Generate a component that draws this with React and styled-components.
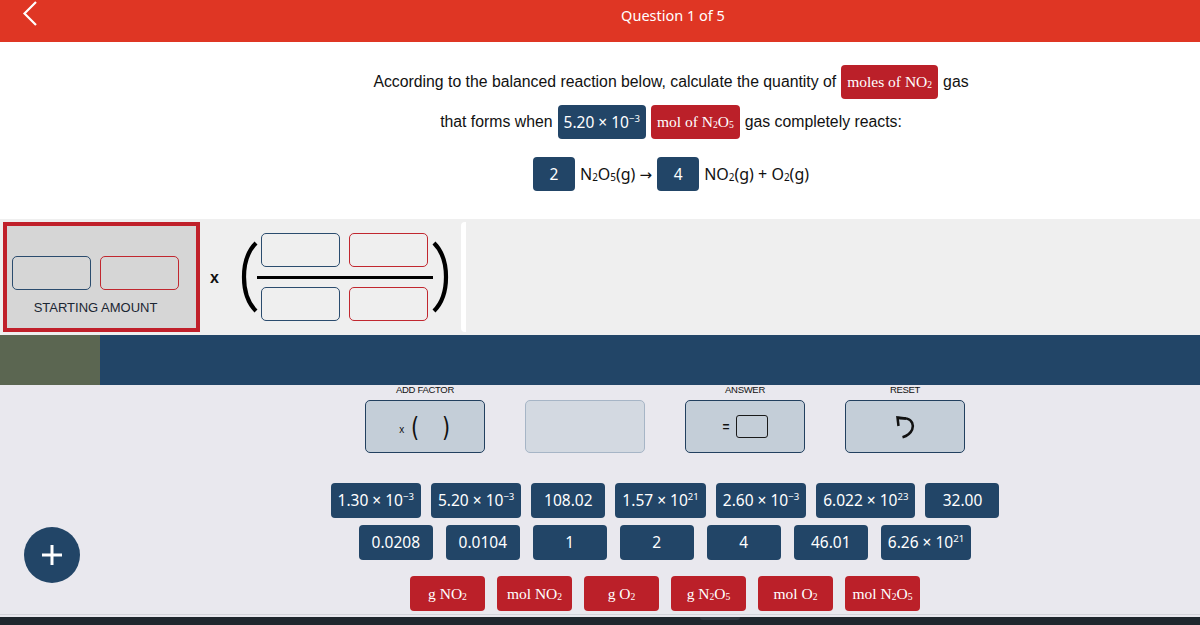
import React from 'react';
import styled, { createGlobalStyle } from 'styled-components';

const GlobalStyle = createGlobalStyle`
  html, body {
    margin: 0;
    padding: 0;
    background: #ffffff;
  }
  * {
    box-sizing: border-box;
  }
`;

const NAVY = '#224567';
const CRIMSON = '#bb2029';
const UI_FONT = '"Noto Sans", "Open Sans", sans-serif';
const SERIF = '"Liberation Serif", "Times New Roman", serif';

const Screen = styled.div`
  width: 1200px;
  height: 625px;
  overflow: hidden;
  display: flex;
  flex-direction: column;
  font-family: "Liberation Sans", Arial, sans-serif;

  sub {
    font-size: 0.62em;
    vertical-align: -0.12em;
    line-height: 0;
  }
  sup {
    font-size: 0.62em;
    vertical-align: 0.6em;
    line-height: 0;
  }
`;

const Header = styled.header`
  height: 42px;
  flex-shrink: 0;
  background: #df3624;
  display: grid;
  grid-template-columns: 146px 1fr;
  align-items: center;
`;

const BackButton = styled.button`
  display: flex;
  align-items: flex-start;
  align-self: start;
  height: 42px;
  padding: 1px 0 0 22px;
  border: none;
  background: transparent;
  cursor: pointer;
`;

const Title = styled.h1`
  margin: 0 0 12px 0;
  text-align: center;
  color: #ffffff;
  font-family: ${UI_FONT};
  font-size: 14.5px;
  font-weight: 400;
`;

const Prompt = styled.section`
  flex-shrink: 0;
  height: 177px;
  padding: 23px 0 0 142px;
  display: flex;
  flex-direction: column;
  align-items: center;
`;

const PromptLine = styled.div`
  display: flex;
  align-items: center;
  gap: 5px;
  height: 34px;
  margin-bottom: ${p => p.$after || 6}px;
  font-size: 15.8px;
  color: #111111;
`;

const Chip = styled.span`
  display: inline-block;
  height: ${p => p.$h || 34}px;
  line-height: ${p => p.$h || 34}px;
  padding: 0 ${p => p.$pad || 6}px;
  min-width: ${p => p.$min || 0}px;
  text-align: center;
  border-radius: 4px;
  color: #ffffff;
  background: ${p => (p.$unit ? CRIMSON : NAVY)};
  font-family: ${p => (p.$unit ? SERIF : UI_FONT)};
  font-size: 15.5px;
  white-space: nowrap;
`;

const Equation = styled.div`
  display: flex;
  align-items: center;
  gap: 5px;
  height: 34px;
  font-family: ${UI_FONT};
  font-size: 16px;
  color: #111111;
`;

const Arrow = styled.span`
  font-family: "DejaVu Sans", sans-serif;
  font-size: 15px;
`;

const Coefficient = styled(Chip)`
  width: 42px;
`;

const Workspace = styled.section`
  flex-shrink: 0;
  height: 116px;
  background: #efefef;
  display: flex;
  align-items: center;
  padding-left: 3px;
`;

const StartBox = styled.div`
  width: 197px;
  height: 110px;
  border: 4px solid #c0202a;
  background: #d6d6d6;
  display: flex;
  flex-direction: column;
  align-items: flex-start;
  padding: 30px 0 0 5px;
`;

const StartContent = styled.div`
  display: flex;
  flex-direction: column;
  align-items: center;
  gap: 10px;
`;

const SlotRow = styled.div`
  display: flex;
  gap: 9px;
`;

const Slot = styled.div`
  width: 79px;
  height: 34px;
  border-radius: 5px;
  border: 1px solid ${p => (p.$unit ? '#c1272f' : '#2b4c6e')};
`;

const StartLabel = styled.div`
  font-size: 13px;
  line-height: 16px;
  color: #1b2633;
`;

const Times = styled.span`
  margin: 0 22px 0 10px;
  font-size: 16px;
  font-weight: 700;
  color: #111111;
  padding-top: 2px;
`;

const Fraction = styled.div`
  display: flex;
  align-items: center;
`;

const Stack = styled.div`
  width: 176px;
  display: flex;
  flex-direction: column;
  align-items: center;
`;

const Bar = styled.div`
  align-self: stretch;
  height: 3.5px;
  background: #000000;
  margin: 9px 0 8px;
`;

const Divider = styled.div`
  width: 5px;
  height: 110px;
  margin-left: 12px;
  background: #ffffff;
  border-radius: 4px 0 0 4px;
`;

const Band = styled.div`
  flex-shrink: 0;
  height: 50px;
  display: flex;
  background: ${NAVY};
`;

const BandTab = styled.div`
  width: 100px;
  background: #5b6651;
`;

const Tray = styled.section`
  flex-shrink: 0;
  height: 230px;
  background: #e9e8ee;
  border-bottom: 1px solid #d3d3d9;
  display: flex;
`;

const Side = styled.div`
  width: 130px;
  display: flex;
  flex-direction: column;
  justify-content: flex-end;
  padding: 0 0 31px 24px;
`;

const AddButton = styled.button`
  width: 56px;
  height: 56px;
  border-radius: 50%;
  border: none;
  background: ${NAVY};
  display: flex;
  align-items: center;
  justify-content: center;
  cursor: pointer;
`;

const Board = styled.div`
  flex: 1;
  display: flex;
  flex-direction: column;
  align-items: center;
`;

const Tools = styled.div`
  display: flex;
  gap: 40px;
`;

const Tool = styled.div`
  width: 120px;
  display: flex;
  flex-direction: column;
  align-items: center;
`;

const ToolLabel = styled.div`
  height: 15px;
  font-size: 9.5px;
  line-height: 10px;
  color: #111111;
  letter-spacing: -0.3px;
`;

const ToolButton = styled.button`
  width: 120px;
  height: 53px;
  border-radius: 5px;
  border: 1px solid ${p => (p.disabled ? '#a6b5c6' : '#22405f')};
  background: ${p => (p.disabled ? '#d3d9e1' : '#c4ced8')};
  display: flex;
  align-items: center;
  justify-content: center;
  gap: 6px;
  padding: 0;
  color: #111111;
  font-family: "Liberation Sans", Arial, sans-serif;
  cursor: ${p => (p.disabled ? 'default' : 'pointer')};
`;

const SmallX = styled.span`
  font-size: 10px;
  margin-top: 6px;
`;

const BigParen = styled.span`
  font-family: "DejaVu Sans", sans-serif;
  font-size: 26px;
  margin: 0 ${p => p.$space || 0}px 0 0;
  line-height: 1;
  transform: scaleX(0.8);
`;

const Equals = styled.span`
  font-size: 12px;
  font-weight: 700;
`;

const AnswerSlot = styled.span`
  width: 32px;
  height: 23px;
  border: 1.5px solid #1a1a1a;
  border-radius: 3px;
`;

const ChipRow = styled.div`
  display: flex;
  gap: ${p => p.$gap}px;
  margin-top: ${p => p.$top}px;
`;

const Footer = styled.div`
  flex: 1;
  border-top: 2px solid #e9e8ee;
  background: #1f262d;
  display: flex;
  justify-content: center;
`;

const FooterTab = styled.div`
  width: 40px;
  height: 3px;
  margin-left: 240px;
  background: #2e363e;
  border-radius: 0 0 3px 3px;
`;

const Chevron = () => (
  <svg width="16" height="26" viewBox="0 0 16 26">
    <polyline points="14,1 2.5,12.5 14,24" fill="none" stroke="#ffffff" strokeWidth="2.2" />
  </svg>
);

const Paren = ({ right }) => (
  <svg width="18" height="72" viewBox="0 0 18 72" style={{ margin: right ? '0 0 0 -2px' : '0 -2px 0 0' }}>
    <path
      d={right ? 'M3 2 C 19 18, 19 54, 3 70' : 'M15 2 C -1 18, -1 54, 15 70'}
      fill="none"
      stroke="#000000"
      strokeWidth="4.2"
    />
  </svg>
);

// curved "undo" arrow: corner head at top-left, sweep clockwise down to the bottom
const UndoIcon = () => (
  <svg width="22" height="26" viewBox="0 0 22 26">
    <path
      d="M4.5 12 L3.5 3.5 L12 4.5"
      fill="none"
      stroke="#111111"
      strokeWidth="2.5"
      strokeLinejoin="miter"
    />
    <path
      d="M4 4 C 8 4.5, 11 4, 13 4.6 C 18 6, 20 11, 18.2 15.5 C 16.5 19.5, 13 22, 8.5 23.2"
      fill="none"
      stroke="#111111"
      strokeWidth="2.5"
    />
  </svg>
);

const PlusIcon = () => (
  <svg width="24" height="24" viewBox="0 0 24 24">
    <path d="M12 2 V22 M2 12 H22" stroke="#ffffff" strokeWidth="3" />
  </svg>
);

const Sci = ({ base, exp }) => (
  <>
    {base} × 10<sup>{exp}</sup>
  </>
);

const values = [
  [<Sci base="1.30" exp="−3" />, <Sci base="5.20" exp="−3" />, '108.02', <Sci base="1.57" exp="21" />,
    <Sci base="2.60" exp="−3" />, <Sci base="6.022" exp="23" />, '32.00'],
  ['0.0208', '0.0104', '1', '2', '4', '46.01', <Sci base="6.26" exp="21" />],
];

const units = [
  <>g NO<sub>2</sub></>,
  <>mol NO<sub>2</sub></>,
  <>g O<sub>2</sub></>,
  <>g N<sub>2</sub>O<sub>5</sub></>,
  <>mol O<sub>2</sub></>,
  <>mol N<sub>2</sub>O<sub>5</sub></>,
];

export default function App() {
  return (
    <>
      <GlobalStyle />
      <Screen>
        <Header>
          <BackButton aria-label="Back">
            <Chevron />
          </BackButton>
          <Title>Question 1 of 5</Title>
        </Header>

        <Prompt>
          <PromptLine>
            <span>According to the balanced reaction below, calculate the quantity of</span>
            <Chip $unit>moles of NO<sub>2</sub></Chip>
            <span>gas</span>
          </PromptLine>
          <PromptLine $after={18}>
            <span>that forms when</span>
            <Chip><Sci base="5.20" exp="−3" /></Chip>
            <Chip $unit>mol of N<sub>2</sub>O<sub>5</sub></Chip>
            <span>gas completely reacts:</span>
          </PromptLine>
          <Equation>
            <Coefficient>2</Coefficient>
            <span>N<sub>2</sub>O<sub>5</sub>(g) <Arrow>→</Arrow></span>
            <Coefficient>4</Coefficient>
            <span>NO<sub>2</sub>(g) + O<sub>2</sub>(g)</span>
          </Equation>
        </Prompt>

        <Workspace>
          <StartBox>
            <StartContent>
              <SlotRow>
                <Slot />
                <Slot $unit />
              </SlotRow>
              <StartLabel>STARTING AMOUNT</StartLabel>
            </StartContent>
          </StartBox>
          <Times>x</Times>
          <Fraction>
            <Paren />
            <Stack>
              <SlotRow>
                <Slot />
                <Slot $unit />
              </SlotRow>
              <Bar />
              <SlotRow>
                <Slot />
                <Slot $unit />
              </SlotRow>
            </Stack>
            <Paren right />
          </Fraction>
          <Divider />
        </Workspace>

        <Band>
          <BandTab />
        </Band>

        <Tray>
          <Side>
            <AddButton aria-label="Add">
              <PlusIcon />
            </AddButton>
          </Side>
          <Board>
            <Tools>
              <Tool>
                <ToolLabel>ADD FACTOR</ToolLabel>
                <ToolButton>
                  <SmallX>x</SmallX>
                  <BigParen $space={14}>(</BigParen>
                  <BigParen>)</BigParen>
                </ToolButton>
              </Tool>
              <Tool>
                <ToolLabel />
                <ToolButton disabled />
              </Tool>
              <Tool>
                <ToolLabel>ANSWER</ToolLabel>
                <ToolButton>
                  <Equals>=</Equals>
                  <AnswerSlot />
                </ToolButton>
              </Tool>
              <Tool>
                <ToolLabel>RESET</ToolLabel>
                <ToolButton>
                  <UndoIcon />
                </ToolButton>
              </Tool>
            </Tools>

            <ChipRow $gap={10} $top={30}>
              {values[0].map((v, i) => (
                <Chip key={i} $h={35} $min={74} $pad={7}>{v}</Chip>
              ))}
            </ChipRow>
            <ChipRow $gap={13} $top={7}>
              {values[1].map((v, i) => (
                <Chip key={i} $h={35} $min={74} $pad={7}>{v}</Chip>
              ))}
            </ChipRow>
            <ChipRow $gap={12} $top={16}>
              {units.map((u, i) => (
                <Chip key={i} $h={35} $unit $min={75}>{u}</Chip>
              ))}
            </ChipRow>
          </Board>
        </Tray>

        <Footer>
          <FooterTab />
        </Footer>
      </Screen>
    </>
  );
}
